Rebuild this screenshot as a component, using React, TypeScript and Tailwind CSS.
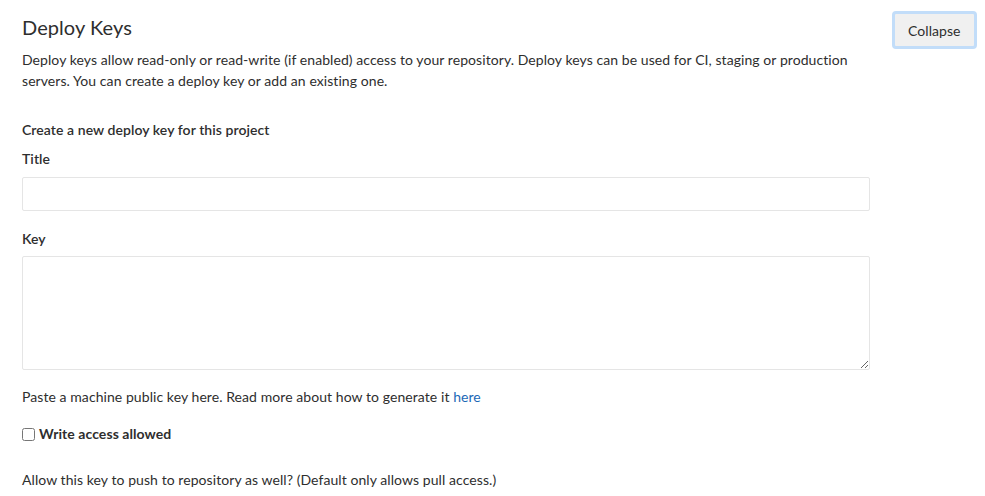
export default function App() {
  return (
    <div className="flex min-h-screen bg-white pl-[22px] pt-[13px] font-['Lato','Liberation_Sans',sans-serif] text-[14px] tracking-[0.07px] text-[#2e2e2e]">
      <div className="w-[848px]">
        <h4 className="text-[20px] leading-[28px] font-normal">Deploy Keys</h4>
        <p className="mt-[8px] leading-[21px]">
          Deploy keys allow read-only or read-write (if enabled) access to your repository. Deploy keys can be used for
          CI, staging or production servers. You can create a deploy key or add an existing one.
        </p>
        <h5 className="mt-[29px] font-semibold leading-[20px]">Create a new deploy key for this project</h5>
        <label className="mt-[9px] block font-semibold leading-[20px]">Title</label>
        <input className="mt-[8px] block h-[34px] w-full rounded-[2px] border border-[#e5e5e5] px-3 outline-none" />
        <label className="mt-[18px] block font-semibold leading-[20px]">Key</label>
        <textarea className="mt-[7px] block h-[114px] w-full rounded-[2px] border border-[#e5e5e5] px-3 outline-none" />
        <p className="mt-[17px] leading-[20px]">
          Paste a machine public key here. Read more about how to generate it{" "}
          <a className="text-[#1b69b6]">here</a>
        </p>
        <label className="mt-[17px] flex items-center gap-[4px] font-bold leading-[20px]">
          <input type="checkbox" className="h-[13px] w-[13px]" />
          Write access allowed
        </label>
        <p className="mt-[26px] leading-[20px]">
          Allow this key to push to repository as well? (Default only allows pull access.)
        </p>
      </div>
      <div className="-mt-[2px] ml-[22px] flex items-start">
        <button className="block h-[38px] rounded-[4px] border-[3px] border-[#c2ddf9] bg-[#f0f0f0] px-[13px] text-[14px] text-[#2e2e2e]">
          Collapse
        </button>
      </div>
    </div>
  );
}
